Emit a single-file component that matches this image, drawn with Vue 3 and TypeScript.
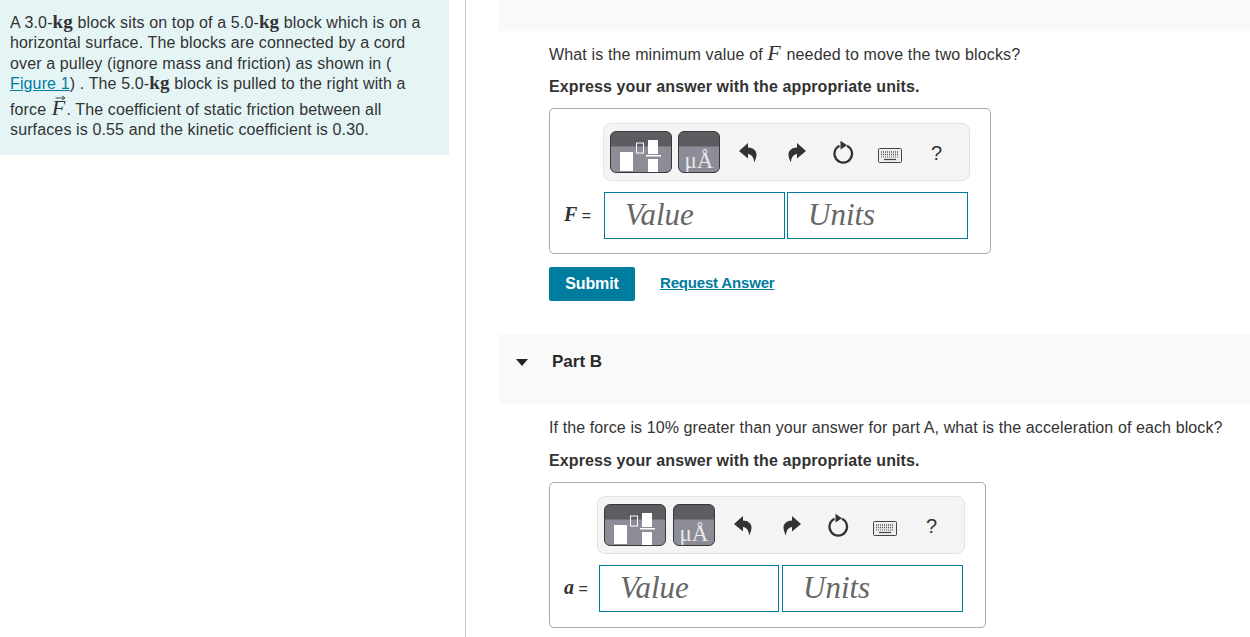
<template>
  <div class="page">
    <aside class="left-col">
      <div class="intro">
        A 3.0-<b class="unit">kg</b> block sits on top of a 5.0-<b class="unit">kg</b> block which is on a
        horizontal surface. The blocks are connected by a cord over a pulley (ignore mass and friction) as shown in (
        <a class="link" href="#">Figure 1</a>) . The 5.0-<b class="unit">kg</b> block is pulled to the right with a
        force
        <span class="vector">
          <svg class="vector-arrow" width="11" height="6" viewBox="0 0 11 6">
            <path d="M0.5 3H9.5M7 1L10 3L7 5" fill="none" stroke="#444" stroke-width="1" />
          </svg>
          F</span>. The coefficient of static friction between all surfaces is 0.55 and the kinetic coefficient is 0.30.
      </div>
    </aside>

    <main class="right-col">
      <div class="part-strip"></div>

      <section v-for="part in parts" :key="part.symbol" class="part" :class="part.cls">
        <div v-if="part.title" class="part-header">
          <span class="caret"></span>
          <span class="part-title">{{ part.title }}</span>
        </div>

        <div class="part-body">
          <p class="question">
            {{ part.before }}<i v-if="part.mathVar" class="math-var">{{ part.mathVar }}</i>{{ part.after }}
          </p>
          <p class="instruction">Express your answer with the appropriate units.</p>

          <div class="answer-box">
            <div class="toolbar">
              <div class="tool-btn tool-btn-wide">
                <svg width="62" height="42" viewBox="0 0 62 42">
                  <rect x="10" y="21" width="13" height="19" fill="#fff" />
                  <rect x="26.5" y="12" width="7" height="10" fill="none" stroke="#fff" stroke-width="1" />
                  <rect x="38" y="9" width="10" height="14" fill="#fff" />
                  <rect x="36" y="24" width="15" height="1.5" fill="#fff" />
                  <rect x="38" y="28" width="10" height="14" fill="#fff" />
                </svg>
              </div>
              <div class="tool-btn tool-btn-text">
                <span class="mu">μÅ</span>
              </div>

              <svg class="tool-icon undo" width="18" height="20" viewBox="0 0 18 20">
                <path d="M0 8L9 0V4.5C14 4.5 18 8 17.5 12C17.3 15 16 18 15 19.5C15 15 13 11.5 9 11V15.5Z" fill="#333" />
              </svg>
              <svg class="tool-icon redo" width="18" height="20" viewBox="0 0 18 20">
                <path d="M18 8L9 0V4.5C4 4.5 0 8 0.5 12C0.7 15 2 18 3 19.5C3 15 5 11.5 9 11V15.5Z" fill="#333" />
              </svg>
              <svg class="tool-icon reset" width="22" height="24" viewBox="0 0 22 24">
                <path d="M7.5 5.8A8.8 8.8 0 1 0 15 5.8" fill="none" stroke="#333" stroke-width="2.2" />
                <path d="M8.5 0.8L15 5.2L8.5 9.5Z" fill="#333" />
              </svg>
              <svg class="tool-icon keyboard" width="24" height="15" viewBox="0 0 24 15">
                <rect x="0.5" y="0.5" width="23" height="14" rx="1" fill="#eee" stroke="#444" />
                <path d="M3 4H21M3 6.5H21" stroke="#555" stroke-width="1.4" stroke-dasharray="1 1" />
                <path d="M3 9H21" stroke="#555" stroke-width="1.2" stroke-dasharray="1 1" />
                <path d="M6 11.5H18" stroke="#444" stroke-width="1.2" />
              </svg>
              <span class="help">?</span>
            </div>

            <div class="answer-row">
              <span class="answer-label"><i class="answer-var">{{ part.symbol }}</i> =</span>
              <div class="field">Value</div>
              <div class="field">Units</div>
            </div>
          </div>

          <div v-if="part.actions" class="actions">
            <button class="submit" type="button">Submit</button>
            <a class="request" href="#">Request Answer</a>
          </div>
        </div>
      </section>
    </main>
  </div>
</template>

<script setup lang="ts">
interface Part {
  cls: string;
  title: string;
  before: string;
  mathVar: string;
  after: string;
  symbol: string;
  actions: boolean;
}

const parts: Part[] = [
  {
    cls: "part-a",
    title: "",
    before: "What is the minimum value of ",
    mathVar: "F",
    after: " needed to move the two blocks?",
    symbol: "F",
    actions: true,
  },
  {
    cls: "part-b",
    title: "Part B",
    before: "If the force is 10% greater than your answer for part A, what is the acceleration of each block?",
    mathVar: "",
    after: "",
    symbol: "a",
    actions: false,
  },
];
</script>

<style scoped>
.page {
  display: flex;
  height: 637px;
  overflow: hidden;
  font-family: "Liberation Sans", Arial, sans-serif;
  color: #333;
  background: #fff;
}

.left-col {
  width: 465px;
  flex-shrink: 0;
  border-right: 1px solid #ccc;
  box-sizing: content-box;
}

.intro {
  width: 449px;
  height: 155px;
  box-sizing: border-box;
  padding: 13px 19px 0 10px;
  background: #e5f5f6;
  font-size: 16px;
  line-height: 20.4px;
  letter-spacing: 0.13px;
}

.unit {
  font-family: "Liberation Serif", serif;
  font-size: 19px;
  line-height: 0;
}

.link {
  color: #007c9e;
}

.vector {
  position: relative;
  display: inline-block;
  height: 25px;
  padding: 0 1px;
  font-family: "Liberation Serif", serif;
  font-style: italic;
  font-size: 22px;
  line-height: 25px;
  vertical-align: bottom;
}

.vector-arrow {
  position: absolute;
  left: 4px;
  top: 0;
}

.right-col {
  margin-left: 33px;
  flex: 1;
  min-width: 0;
}

.part-strip {
  height: 31px;
  background: #f9f9f9;
}

.part-header {
  display: flex;
  align-items: center;
  height: 70px;
  background: #f9f9f9;
  padding-bottom: 14px;
  box-sizing: border-box;
}

.caret {
  width: 0;
  height: 0;
  margin-left: 17px;
  border-left: 6.5px solid transparent;
  border-right: 6.5px solid transparent;
  border-top: 7px solid #222;
}

.part-title {
  margin-left: 24px;
  font-size: 17px;
  font-weight: 700;
  color: #2a2a2a;
}

.part-body {
  padding-left: 50px;
  padding-top: 14px;
}

.part-b {
  margin-top: 33px;
}

.question {
  margin: 0;
  font-size: 16px;
  line-height: 20px;
  white-space: nowrap;
  letter-spacing: 0.105px;
}

.part-a .question {
  letter-spacing: 0.14px;
}

.math-var {
  font-family: "Liberation Serif", serif;
  font-size: 22px;
  line-height: 0;
  padding-right: 1px;
}

.instruction {
  margin: 12px 0 0;
  font-size: 16px;
  font-weight: 700;
  line-height: 20px;
  letter-spacing: 0.11px;
}

.part-b .instruction {
  margin-top: 13px;
}

.answer-box {
  width: 442px;
  height: 146px;
  margin-top: 11px;
  box-sizing: border-box;
  padding-top: 14px;
  border: 1px solid #aaa;
  border-radius: 5px;
}

.part-b .answer-box {
  width: 437px;
  padding-top: 13px;
}

.toolbar {
  display: flex;
  align-items: center;
  width: 367px;
  height: 58px;
  margin-left: 53px;
  box-sizing: border-box;
  padding-left: 6px;
  background: #f4f4f4;
  border: 1px solid #e2e2e2;
  border-radius: 8px;
}

.part-b .toolbar {
  width: 368px;
  margin-left: 47px;
}

.tool-btn {
  height: 42px;
  box-sizing: border-box;
  border: 1px solid #38383c;
  border-radius: 6px;
  background: linear-gradient(to bottom, #5d5d61 0, #5d5d61 14px, #8d8d98 15px, #8c8c96 100%);
  overflow: hidden;
}

.tool-btn svg {
  display: block;
  margin: -1px;
}

.tool-btn-wide {
  width: 62px;
}

.tool-btn-text {
  width: 42px;
  margin-left: 6px;
  display: flex;
  justify-content: center;
  align-items: flex-end;
}

.part-b .tool-btn-text {
  margin-left: 7px;
}

.mu {
  color: #e8e8ec;
  font-family: "Liberation Serif", serif;
  font-size: 23px;
  line-height: 23px;
}

.undo {
  margin: 2px 0 0 19px;
}

.redo {
  margin: 2px 0 0 31px;
}

.reset {
  margin-left: 26px;
}

.keyboard {
  margin: 6px 0 0 24px;
}

.help {
  margin: 2px 0 0 29px;
  font-size: 20px;
  color: #333;
}

.answer-row {
  display: flex;
  align-items: center;
  margin-top: 11px;
  height: 47px;
}

.answer-label {
  width: 54px;
  box-sizing: border-box;
  padding-left: 14px;
  font-size: 16px;
  white-space: nowrap;
}

.answer-var {
  font-family: "Liberation Serif", serif;
  font-weight: 700;
  font-size: 20px;
  line-height: 0;
}

.field {
  width: 181px;
  height: 47px;
  margin-right: 2px;
  box-sizing: border-box;
  padding-left: 20px;
  border: 1px solid #007c9e;
  font-family: "Liberation Serif", serif;
  font-style: italic;
  font-size: 31px;
  line-height: 43px;
  color: #666;
}

.part-b .answer-label {
  width: 49px;
}

.part-b .field {
  width: 180px;
  margin-right: 3px;
}

.part-b .field:last-child {
  width: 181px;
}

.actions {
  display: flex;
  align-items: center;
  margin-top: 13px;
}

.submit {
  width: 86px;
  height: 34px;
  padding: 0;
  border: 0;
  border-radius: 2px;
  background: #007c9e;
  color: #fff;
  font-family: "Liberation Sans", Arial, sans-serif;
  font-size: 16px;
  font-weight: 700;
  letter-spacing: -0.1px;
}

.request {
  margin: 0 0 4px 25px;
  color: #007c9e;
  font-size: 15px;
  font-weight: 700;
  letter-spacing: -0.18px;
}
</style>
